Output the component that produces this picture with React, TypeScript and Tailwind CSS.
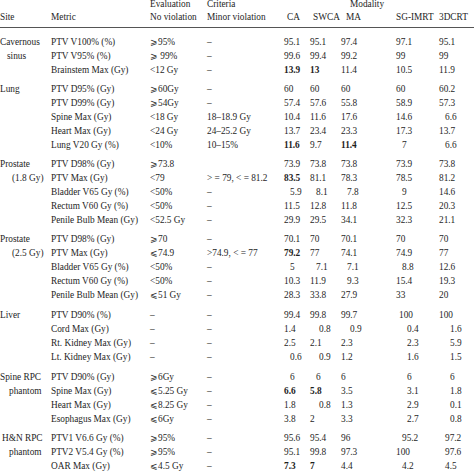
import React from "react"

type Row = [string, string, string, string, string, string, string, string]

type Group = {
    site: [string, string][]
    gap: string
    rows: Row[]
}

const cols = "grid grid-cols-[51px_99px_57px_77px_26px_31px_55px_43px_1fr]"

// prefix: ^ one digit in, ^^ two digits in, ~ about 9px, ' 3px; suffix * = bold
const shift: Record<string, string> = {
    "": "",
    "^": "pl-[6px]",
    "^^": "pl-[11px]",
    "~": "pl-[9px]",
    "'": "pl-[3px]",
}

const groups: Group[] = [
    {
        site: [["Cavernous", ""], ["sinus", "pl-[7px]"]],
        gap: "mt-[8px]",
        rows: [
            ["PTV V100% (%)", "⩾95%", "–", "95.1", "95.1", "97.4", "97.1", "95.1"],
            ["PTV V95% (%)", "⩾ 99%", "–", "99.6", "99.4", "99.2", "99", "99"],
            ["Brainstem Max (Gy)", "<12 Gy", "–", "13.9*", "13*", "11.4", "10.5", "11.9"],
        ],
    },
    {
        site: [["Lung", ""]],
        gap: "mt-[5px]",
        rows: [
            ["PTV D95% (Gy)", "⩾60Gy", "–", "60", "60", "60", "60", "60.2"],
            ["PTV D99% (Gy)", "⩾54Gy", "–", "57.4", "57.6", "55.8", "58.9", "57.3"],
            ["Spine Max (Gy)", "<18 Gy", "18–18.9 Gy", "10.4", "11.6", "17.6", "14.6", "^6.6"],
            ["Heart Max (Gy)", "<24 Gy", "24–25.2 Gy", "13.7", "23.4", "23.3", "17.3", "13.7"],
            ["Lung V20 Gy (%)", "<10%", "10–15%", "11.6*", "9.7", "11.4*", "^7", "^6.6"],
        ],
    },
    {
        site: [["Prostate", ""], ["(1.8 Gy)", "pl-[12px]"]],
        gap: "mt-[5px]",
        rows: [
            ["PTV D98% (Gy)", "⩾73.8", "", "73.9", "73.8", "73.8", "73.9", "73.8"],
            ["PTV Max (Gy)", "<79", "> = 79, < = 81.2", "83.5*", "81.1", "78.3", "78.5", "81.2"],
            ["Bladder V65 Gy (%)", "<50%", "–", "^5.9", "^8.1", "^7.8", "^9", "14.6"],
            ["Rectum V60 Gy (%)", "<50%", "–", "11.5", "12.8", "11.8", "12.5", "20.3"],
            ["Penile Bulb Mean (Gy)", "<52.5 Gy", "–", "29.9", "29.5", "34.1", "32.3", "21.1"],
        ],
    },
    {
        site: [["Prostate", ""], ["(2.5 Gy)", "pl-[12px]"]],
        gap: "mt-[5px]",
        rows: [
            ["PTV D98% (Gy)", "⩾70", "–", "70.1", "70", "70.1", "70", "70"],
            ["PTV Max (Gy)", "⩽74.9", ">74.9, < = 77", "79.2*", "77", "74.1", "74.9", "77"],
            ["Bladder V65 Gy (%)", "<50%", "–", "^5", "^7.1", "^7.1", "^8.8", "12.6"],
            ["Rectum V60 Gy (%)", "<50%", "–", "10.3", "11.9", "^9.3", "15.4", "19.3"],
            ["Penile Bulb Mean (Gy)", "⩽51 Gy", "–", "28.3", "33.8", "27.9", "33", "20"],
        ],
    },
    {
        site: [["Liver", ""]],
        gap: "mt-[6px]",
        rows: [
            ["PTV D90% (%)", "–", "–", "99.4", "99.8", "99.7", "'100", "100"],
            ["Cord Max (Gy)", "–", "–", "1.4", "~0.8", "~0.9", "^^0.4", "^^1.6"],
            ["Rt. Kidney Max (Gy)", "–", "–", "2.5", "2.1", "2.3", "^^2.3", "^^5.9"],
            ["Lt. Kidney Max (Gy)", "–", "–", "^0.6", "~0.9", "1.2", "^^1.6", "^^1.5"],
        ],
    },
    {
        site: [["Spine RPC", ""], ["phantom", "pl-[9px]"]],
        gap: "mt-[6px]",
        rows: [
            ["PTV D90% (Gy)", "⩾6Gy", "–", "^6", "^6", "6", "^^6", "^^6"],
            ["Spine Max (Gy)", "⩽5.25 Gy", "–", "6.6*", "5.8*", "3.5", "^^3.1", "^^1.8"],
            ["Heart Max (Gy)", "⩽8.25 Gy", "–", "1.8", "~0.8", "1.3", "^^2.9", "^^0.1"],
            ["Esophagus Max (Gy)", "⩽6Gy", "–", "3.8", "2", "3.3", "^^2.7", "^^0.8"],
        ],
    },
    {
        site: [["H&N RPC", "pl-[2px]"], ["phantom", "pl-[9px]"]],
        gap: "mt-[5px]",
        rows: [
            ["PTV1 V6.6 Gy (%)", "⩾95%", "–", "95.6", "95.4", "96", "^95.2", "^97.2"],
            ["PTV2 V5.4 Gy (%)", "⩾95%", "–", "95.1", "99.8", "97.3", "100", "^97.6"],
            ["OAR Max (Gy)", "⩽4.5 Gy", "–", "7.3*", "7*", "4.4", "^4.2", "^4.5"],
        ],
    },
]

function Num({ v }: { v: string }) {
    const m = v.match(/^(\^\^|\^|~|')?(.*?)(\*)?$/)
    const pre = m?.[1] ?? ""
    const text = m?.[2] ?? v
    const bold = !!m?.[3]
    return <span className={`${shift[pre]} ${bold ? "font-bold" : ""}`}>{text}</span>
}

export default function App() {
    return (
        <div className="w-[474px] h-[473px] overflow-hidden bg-white text-[#1e1e1e] font-['Liberation_Serif','DejaVu_Serif',serif] text-[9.3px] whitespace-nowrap">
            {/* header */}
            <div className={`${cols} h-[9px] leading-[9px]`}>
                <span />
                <span />
                <span>Evaluation</span>
                <span>Criteria</span>
                <span />
                <span />
                <span className="pl-[9px]">Modality</span>
                <span />
                <span />
            </div>
            <div className={`${cols} mt-[2px] h-[13px] items-center`}>
                <span>Site</span>
                <span>Metric</span>
                <span>No violation</span>
                <span>Minor violation</span>
                <span className="pl-[3px]">CA</span>
                <span className="pl-[3px]">SWCA</span>
                <span className="pl-[5px]">MA</span>
                <span>SG-IMRT</span>
                <span>3DCRT</span>
            </div>
            <div className="mt-[3px] h-px bg-[#555]" />

            {groups.map((g, gi) => (
                <div key={gi} className={g.gap}>
                    {g.rows.map((r, ri) => (
                        <div key={ri} className={`${cols} h-[14px] items-center`}>
                            <span className={g.site[ri]?.[1] ?? ""}>{g.site[ri]?.[0] ?? ""}</span>
                            <span>{r[0]}</span>
                            <span>{r[1]}</span>
                            <span>{r[2]}</span>
                            {r.slice(3).map((v, vi) => (
                                <Num key={vi} v={v} />
                            ))}
                        </div>
                    ))}
                </div>
            ))}
        </div>
    )
}
